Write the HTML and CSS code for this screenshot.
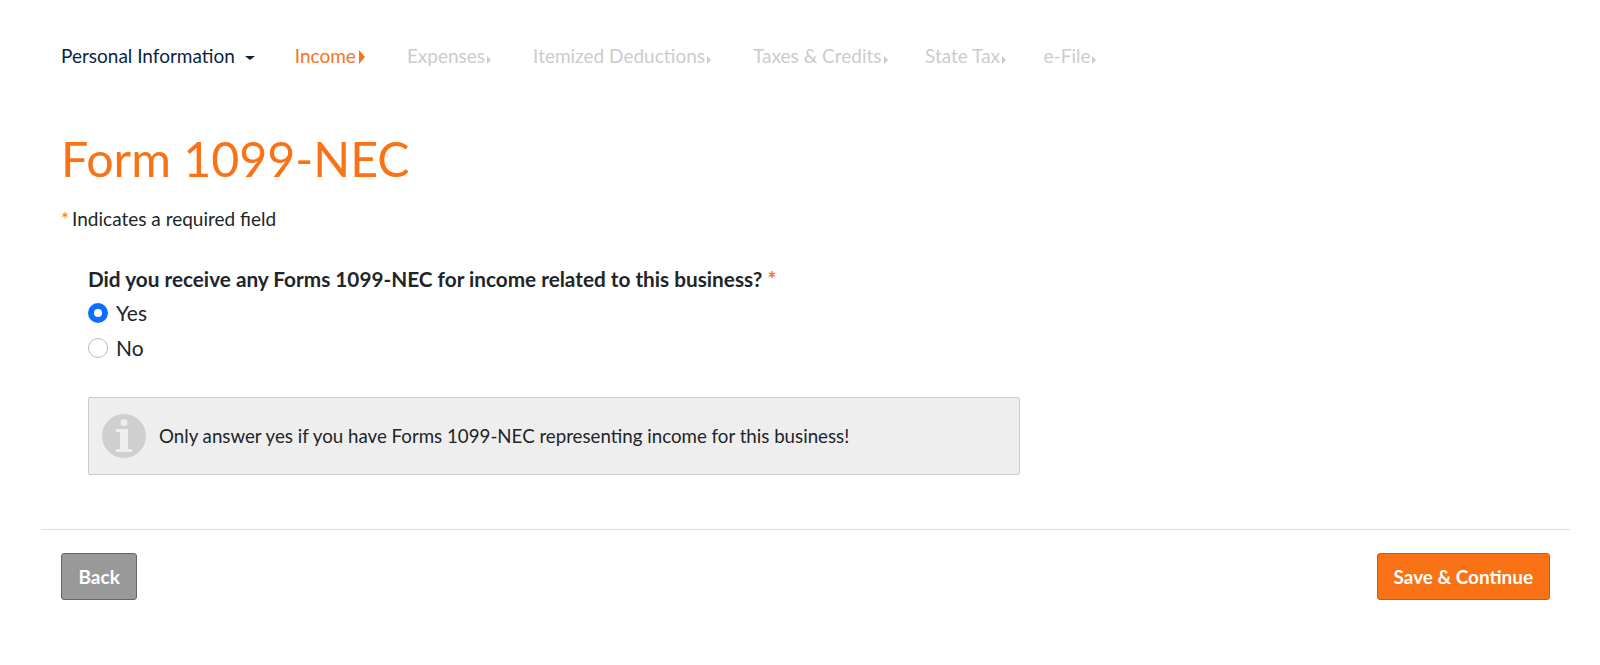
FILE: index.html
```html
<!DOCTYPE html>
<html lang="en">
    <head>
        <title>Form 1099-NEC</title>
        <meta charset="utf-8">
        <meta name="viewport" content="width=device-width, initial-scale=1">
        <link rel="stylesheet" href="styles.css">
    </head>
    <body>
        <nav class="steps">
            <a class="step step-done">Personal Information <span class="caret-down"></span></a>
            <a class="step step-active">Income<span class="arrow arrow-big"></span></a>
            <a class="step">Expenses<span class="arrow"></span></a>
            <a class="step">Itemized Deductions<span class="arrow"></span></a>
            <a class="step">Taxes &amp; Credits<span class="arrow"></span></a>
            <a class="step step-tight">State Tax<span class="arrow"></span></a>
            <a class="step step-tight">e-File<span class="arrow"></span></a>
        </nav>
        <main class="content">
            <h1>Form 1099-NEC</h1>
            <p class="required-note"><span class="star">*</span>Indicates a required field</p>
            <div class="question">
                <div class="question-label">Did you receive any Forms 1099-NEC for income related to this business? <span class="star">*</span></div>
                <div class="radio-group">
                    <label class="radio-row"><span class="radio radio-on"></span>Yes</label>
                    <label class="radio-row"><span class="radio"></span>No</label>
                </div>
                <div class="info-box">
                    <svg class="info-icon" viewBox="0 0 44 44" width="44" height="44">
                        <circle cx="22" cy="22" r="22" fill="#cfcfcf"/>
                        <circle cx="22" cy="8.5" r="3.5" fill="#eee"/>
                        <path d="M14 15h12v20h4v3H14v-3h4V18h-4z" fill="#eee"/>
                    </svg>
                    <span>Only answer yes if you have Forms 1099-NEC representing income for this business!</span>
                </div>
            </div>
        </main>
        <footer class="actions">
            <button class="btn btn-back">Back</button>
            <button class="btn btn-save">Save &amp; Continue</button>
        </footer>
    </body>
</html>
```
FILE: styles.css
```css
html, body {
    margin: 0;
    padding: 0;
    background-color: #fff;
    color: #212529;
    font-family: "Lato", "Liberation Sans", sans-serif;
    font-size: 19px;
}

.steps {
    display: flex;
    align-items: center;
    height: 24px;
    padding: 43px 61px 0;
    gap: 42px;
}

.step {
    color: #ccc;
    white-space: nowrap;
}

.step-tight {
    margin-left: -4.5px;
}

.step-done {
    margin-right: -2px;
    color: #0b1f44;
}

.step-active {
    color: #f97316;
}

.caret-down {
    display: inline-block;
    margin-left: 5px;
    vertical-align: 3px;
    border-top: 4px solid #0b1f44;
    border-left: 5px solid transparent;
    border-right: 5px solid transparent;
}

.arrow {
    display: inline-block;
    margin-left: 2px;
    vertical-align: -1px;
    border-left: 4px solid #ccc;
    border-top: 4px solid transparent;
    border-bottom: 4px solid transparent;
}

.arrow-big {
    margin-left: 3px;
    vertical-align: -1px;
    border-left: 6px solid #f97316;
    border-top: 7px solid transparent;
    border-bottom: 7px solid transparent;
}

.content {
    padding: 0 62px;
}

h1 {
    margin: 61px 0 0 -1px;
    color: #f97316;
    font-size: 48.3px;
    font-weight: 400;
    line-height: 60px;
}

.required-note {
    margin: 19px 0 0 -1px;
    line-height: 24px;
}

.star {
    color: #f97316;
}

.required-note .star {
    margin-right: 3px;
}

.question {
    margin: 36px 0 0 26px;
}

.question-label {
    font-size: 20.75px;
    font-weight: 700;
    line-height: 24px;
}

.radio-group {
    margin-top: 4px;
}

.radio-row {
    display: flex;
    align-items: center;
    height: 35px;
    font-size: 21px;
}

.radio {
    box-sizing: border-box;
    width: 20px;
    height: 20px;
    margin-right: 8px;
    border: 1px solid #bbb;
    border-radius: 50%;
}

.radio-on {
    border: 6px solid #0d6efd;
}

.info-box {
    display: flex;
    align-items: center;
    box-sizing: border-box;
    width: 932px;
    height: 78px;
    margin-top: 32px;
    padding-left: 13px;
    gap: 13px;
    font-size: 18.72px;
    background-color: #eee;
    border: 1px solid #ccc;
    border-radius: 2px;
}

.actions {
    display: flex;
    justify-content: space-between;
    margin: 54px 30px 0 41px;
    padding: 23px 20px 0;
    border-top: 1px solid #ddd;
}

.btn {
    height: 47px;
    color: #fff;
    font-family: inherit;
    font-size: 19px;
    font-weight: 700;
    border-radius: 3px;
}

.btn-back {
    padding: 0 16.5px;
    background-color: #999;
    border: 1px solid #666;
}

.btn-save {
    padding: 0 16px;
    font-size: 18.9px;
    background-color: #f97316;
    border: 1px solid #d9560b;
}
```
